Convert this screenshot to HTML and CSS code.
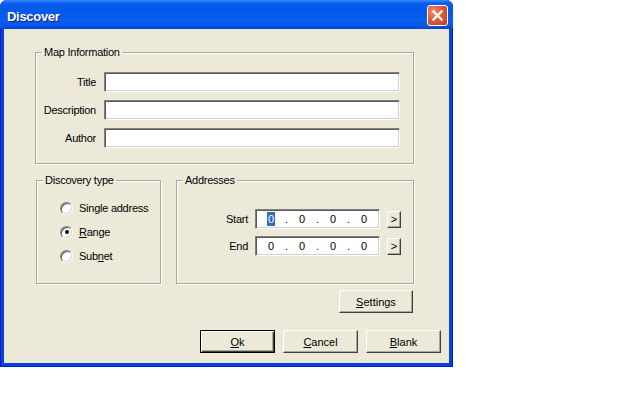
FILE: index.html
```html
<!DOCTYPE html>
<html lang="en">
<head>
    <meta charset="UTF-8">
    <title>Discover</title>
    <link rel="stylesheet" href="styles.css">
</head>
<body>
    <div class="window">
        <div class="titlebar">
            <span class="title">Discover</span>
            <span class="close">
                <svg width="19" height="19" viewBox="0 0 19 19">
                    <path d="M5.5 5.5 L13.5 13.5 M13.5 5.5 L5.5 13.5" stroke="#fff" stroke-width="2.4" stroke-linecap="square"/>
                </svg>
            </span>
        </div>

        <div class="client">
            <fieldset class="group map">
                <legend>Map Information</legend>
                <div class="fields">
                    <label for="title">Title</label>
                    <input type="text" id="title">
                    <label for="description">Description</label>
                    <input type="text" id="description">
                    <label for="author">Author</label>
                    <input type="text" id="author">
                </div>
            </fieldset>

            <div class="middle">
                <fieldset class="group discovery">
                    <legend>Discovery type</legend>
                    <label class="option"><span class="radio"></span>Single address</label>
                    <label class="option"><span class="radio checked"></span><u>R</u>ange</label>
                    <label class="option"><span class="radio"></span>Sub<u>n</u>et</label>
                </fieldset>

                <fieldset class="group addresses">
                    <legend>Addresses</legend>
                    <div class="ranges">
                        <span class="range-label">Start</span>
                        <div class="ip">
                            <span class="octet"><span class="sel">0</span></span><span class="dot">.</span>
                            <span class="octet">0</span><span class="dot">.</span>
                            <span class="octet">0</span><span class="dot">.</span>
                            <span class="octet">0</span>
                        </div>
                        <button class="arrow">&gt;</button>

                        <span class="range-label">End</span>
                        <div class="ip">
                            <span class="octet">0</span><span class="dot">.</span>
                            <span class="octet">0</span><span class="dot">.</span>
                            <span class="octet">0</span><span class="dot">.</span>
                            <span class="octet">0</span>
                        </div>
                        <button class="arrow">&gt;</button>
                    </div>
                </fieldset>
            </div>

            <div class="settings-row">
                <button class="btn"><u>S</u>ettings</button>
            </div>

            <div class="actions">
                <button class="btn default"><u>O</u>k</button>
                <button class="btn"><u>C</u>ancel</button>
                <button class="btn"><u>B</u>lank</button>
            </div>
        </div>
    </div>
</body>
</html>
```

FILE: styles.css
```css
body {
    margin: 0;
    background: #fff;
    font-family: "Liberation Sans", Arial, sans-serif;
    font-size: 11px;
    letter-spacing: -0.25px;
    color: #000;
}
.window {
    width: 453px;
    height: 367px;
    display: flex;
    flex-direction: column;
    background: #0842d6;
    border-radius: 7px 7px 0 0;
    box-shadow: inset 1px 0 0 #0019cf, inset -1px 0 0 #0019cf, inset 0 -1px 0 #0019cf;
}
.titlebar {
    height: 29px;
    flex: none;
    display: flex;
    align-items: center;
    padding: 0 5px 0 7px;
    border-radius: 7px 7px 0 0;
    background: linear-gradient(#3d8cff 0, #0a5ff0 3px, #0458e8 10px, #0860f0 20px, #0456e6 26px, #0341cf 29px);
}
.title {
    color: #fff;
    font-weight: bold;
    font-size: 13px;
    letter-spacing: -0.3px;
    margin-top: 3px;
    text-shadow: 1px 1px 0 #0a1a8a;
}
.close {
    margin-left: auto;
    margin-top: 2px;
    width: 21px;
    height: 21px;
    box-sizing: border-box;
    border: 1px solid #fff;
    border-radius: 3px;
    background: radial-gradient(circle at 30% 30%, #f0906e 0, #e0593a 45%, #c53d16 100%);
    display: flex;
    align-items: center;
    justify-content: center;
}
.close svg {
    display: block;
}
.client {
    flex: 1;
    margin: 0 4px 4px 4px;
    background: #ece9d8;
    padding: 17px 0 0 31px;
}

/* group boxes */
.group {
    margin: 0;
    padding: 0;
    min-width: 0;
    box-sizing: border-box;
    border: 1px solid #aca899;
    box-shadow: inset 1px 1px 0 #fff, 1px 1px 0 #fff;
}
.group legend {
    margin-left: 6px;
    padding: 0 2px;
    line-height: 13px;
}
.map {
    width: 379px;
    padding: 13px 0 15px 0;
}
.fields {
    display: grid;
    grid-template-columns: 60px 296px;
    grid-auto-rows: 20px;
    column-gap: 8px;
    row-gap: 8px;
}
.fields label {
    text-align: right;
    line-height: 20px;
}
.fields input,
.ip {
    box-sizing: border-box;
    height: 20px;
    margin: 0;
    padding: 0;
    background: #fff;
    border: 1px solid;
    border-color: #808080 #fff #fff #808080;
    box-shadow: inset 1px 1px 0 #5a5a5a, inset -1px -1px 0 #d4d0c8;
    outline: none;
    font: inherit;
}

.middle {
    display: flex;
    gap: 15px;
    margin-top: 10px;
    padding-left: 1px;
}
.discovery {
    width: 125px;
    padding: 9px 0 15px 0;
}
.option {
    display: flex;
    align-items: center;
    height: 24px;
    padding-left: 23px;
}
.radio {
    width: 13px;
    height: 13px;
    box-sizing: border-box;
    margin-right: 6px;
    border-radius: 50%;
    background: #fff;
    border: 1px solid;
    border-color: #808080 #fff #fff #808080;
    box-shadow: inset 1px 1px 0 #5a5a5a, inset -1px -1px 0 #d4d0c8;
    display: flex;
    align-items: center;
    justify-content: center;
}
.radio.checked::after {
    content: "";
    width: 4px;
    height: 4px;
    border-radius: 50%;
    background: #000;
}

.addresses {
    width: 238px;
    padding: 22px 0 27px 0;
}
.ranges {
    display: grid;
    grid-template-columns: 71px 125px 14px;
    grid-auto-rows: 20px;
    column-gap: 7px;
    row-gap: 7px;
    align-items: center;
}
.range-label {
    text-align: right;
}
.ip {
    display: flex;
    align-items: center;
    padding-left: 5px;
}
.octet {
    width: 20px;
    text-align: center;
}
.dot {
    width: 11px;
    text-align: center;
}
.sel {
    background: #316ac5;
    color: #fff;
    padding: 1px 1px;
}

/* buttons */
button {
    font: inherit;
    color: #000;
    margin: 0;
    padding: 0;
    background: #ece9d8;
    border: 1px solid;
    border-color: #fff #404040 #404040 #fff;
    box-shadow: inset -1px -1px 0 #aca899;
    cursor: pointer;
}
.arrow {
    width: 14px;
    height: 17px;
    line-height: 13px;
}
.btn {
    width: 75px;
    height: 23px;
}
.btn.default {
    border-color: #000;
    box-shadow: inset 1px 1px 0 #fff, inset -1px -1px 0 #404040, inset -2px -2px 0 #aca899;
}
.settings-row {
    display: flex;
    justify-content: flex-end;
    margin-top: 6px;
    padding-right: 36px;
}
.settings-row .btn {
    width: 74px;
}
.actions {
    display: flex;
    justify-content: flex-end;
    gap: 8px;
    margin-top: 17px;
    padding-right: 8px;
}
```
